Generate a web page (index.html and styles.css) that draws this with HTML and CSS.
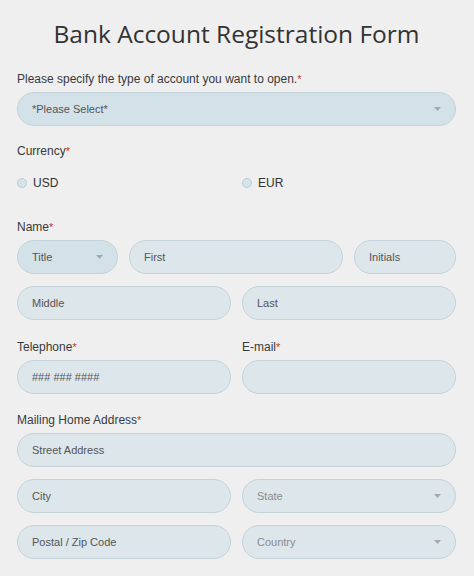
FILE: index.html
```html
<!DOCTYPE html>
<html lang="en">
<head>
<meta charset="utf-8">
<title>Bank Account Registration Form</title>
<link rel="stylesheet" href="styles.css">
</head>
<body>
<form class="form">
  <h1 class="title">Bank Account Registration Form</h1>

  <label class="label first-label">Please specify the type of account you want to open.<span class="req">*</span></label>
  <div class="select select-dark">
    <span class="select-text">*Please Select*</span>
    <svg class="caret" width="7" height="4" viewBox="0 0 7 4"><path d="M0 0h7L3.5 4z"/></svg>
  </div>

  <label class="label currency-label">Currency<span class="req">*</span></label>
  <div class="radios">
    <label class="radio"><span class="dot"></span>USD</label>
    <label class="radio"><span class="dot"></span>EUR</label>
  </div>

  <label class="label name-label">Name<span class="req">*</span></label>
  <div class="row3">
    <div class="select select-dark">
      <span class="select-text">Title</span>
      <svg class="caret" width="7" height="4" viewBox="0 0 7 4"><path d="M0 0h7L3.5 4z"/></svg>
    </div>
    <input class="field" type="text" placeholder="First">
    <input class="field" type="text" placeholder="Initials">
  </div>
  <div class="row2 row-gap">
    <input class="field" type="text" placeholder="Middle">
    <input class="field" type="text" placeholder="Last">
  </div>

  <div class="row2 labels-row">
    <label class="label">Telephone<span class="req">*</span></label>
    <label class="label">E-mail<span class="req">*</span></label>
  </div>
  <div class="row2">
    <input class="field" type="text" placeholder="### ### ####">
    <input class="field" type="text" placeholder="">
  </div>

  <label class="label address-label">Mailing Home Address<span class="req">*</span></label>
  <input class="field" type="text" placeholder="Street Address">
  <div class="row2 row-gap">
    <input class="field" type="text" placeholder="City">
    <div class="select">
      <span class="select-text muted">State</span>
      <svg class="caret" width="7" height="4" viewBox="0 0 7 4"><path d="M0 0h7L3.5 4z"/></svg>
    </div>
  </div>
  <div class="row2 row-gap">
    <input class="field" type="text" placeholder="Postal / Zip Code">
    <div class="select">
      <span class="select-text muted">Country</span>
      <svg class="caret" width="7" height="4" viewBox="0 0 7 4"><path d="M0 0h7L3.5 4z"/></svg>
    </div>
  </div>
</form>
</body>
</html>
```

FILE: styles.css
```css
html, body {
  margin: 0;
  padding: 0;
  background: #eeefee;
}

body {
  font-family: "Liberation Sans", Arial, sans-serif;
  color: #333;
}

.form {
  display: flex;
  flex-direction: column;
  padding: 18px 18px 0 17px;
}

.title {
  margin: 0;
  font-family: "Open Sans", sans-serif;
  font-weight: 400;
  font-size: 24.5px;
  line-height: 32px;
  color: #333;
  text-align: center;
}

.label {
  display: block;
  font-size: 12px;
  line-height: 15px;
  color: #3a3a3a;
  margin-bottom: 5px;
}

.req {
  color: #c0392b;
  font-size: 11px;
}

.first-label { margin-top: 22px; }
.currency-label { margin-top: 18px; margin-bottom: 0; }
.name-label { margin-top: 29px; }
.labels-row { margin-top: 20px; }
.address-label { margin-top: 19px; }

.field,
.select {
  box-sizing: border-box;
  width: 100%;
  height: 34px;
  margin: 0;
  padding: 0 14px;
  border: 1px solid #c4d3da;
  border-radius: 17px;
  background: #dde6eb;
  font-family: "Liberation Sans", Arial, sans-serif;
  font-size: 11px;
  color: #555;
  outline: none;
}

.field::placeholder {
  color: #555;
  opacity: 1;
}

.select {
  display: flex;
  align-items: center;
  justify-content: space-between;
}

.select-dark {
  background: #d3e1e8;
}

.select-text {
  color: #555;
}

.select-text.muted {
  color: #8c8c8c;
}

.caret {
  fill: #a8a8a8;
  flex: none;
}

.radios {
  display: grid;
  grid-template-columns: 1fr 1fr;
  column-gap: 11px;
  margin-top: 16px;
  height: 16px;
}

.radio {
  display: flex;
  align-items: center;
  gap: 6px;
  font-size: 12px;
  color: #333;
}

.dot {
  box-sizing: border-box;
  width: 10px;
  height: 10px;
  border-radius: 50%;
  border: 1px solid #b9cdd6;
  background: #d6e3ea;
}

.row2 {
  display: grid;
  grid-template-columns: 1fr 1fr;
  column-gap: 11px;
}

.row3 {
  display: grid;
  grid-template-columns: 101fr 214fr 102fr;
  column-gap: 11px;
}

.row-gap {
  margin-top: 12px;
}
```
